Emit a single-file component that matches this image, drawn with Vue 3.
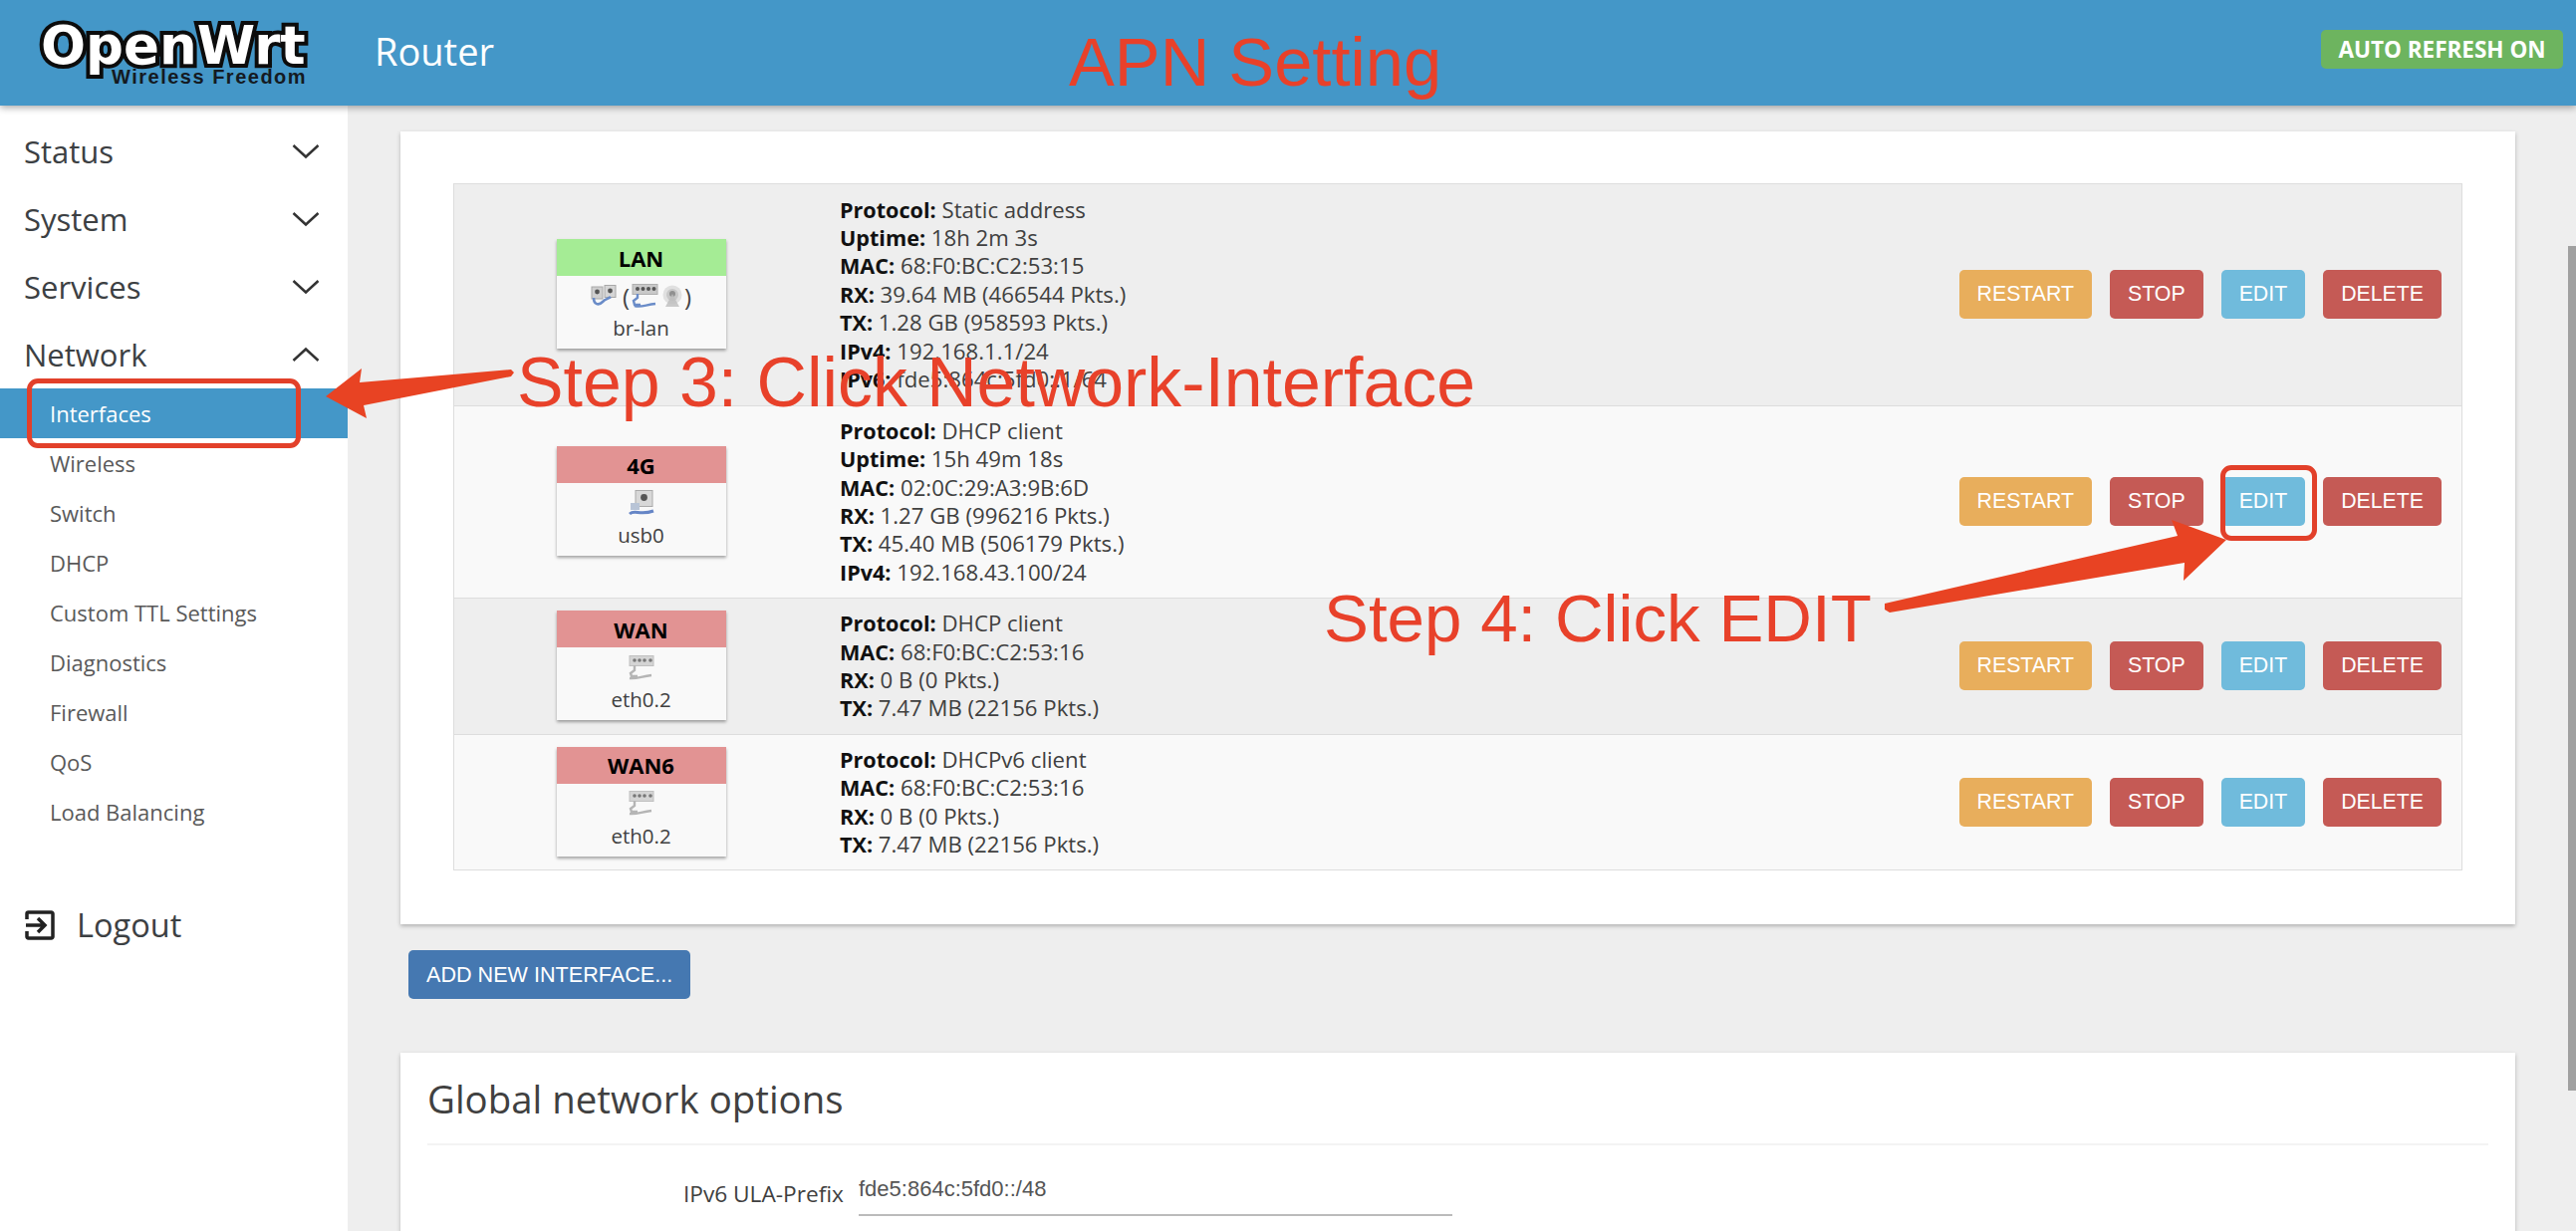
<script setup>
const topMenu = ['Status', 'System', 'Services']
const subMenu = ['Interfaces', 'Wireless', 'Switch', 'DHCP', 'Custom TTL Settings', 'Diagnostics', 'Firewall', 'QoS', 'Load Balancing']
const rows = [
  { name: 'LAN', up: true, dev: 'br-lan', icons: 'bridge', lines: [['Protocol:', 'Static address'], ['Uptime:', '18h 2m 3s'], ['MAC:', '68:F0:BC:C2:53:15'], ['RX:', '39.64 MB (466544 Pkts.)'], ['TX:', '1.28 GB (958593 Pkts.)'], ['IPv4:', '192.168.1.1/24'], ['IPv6:', 'fde5:864c:5fd0::1/64']] },
  { name: '4G', up: false, dev: 'usb0', icons: 'eth', lines: [['Protocol:', 'DHCP client'], ['Uptime:', '15h 49m 18s'], ['MAC:', '02:0C:29:A3:9B:6D'], ['RX:', '1.27 GB (996216 Pkts.)'], ['TX:', '45.40 MB (506179 Pkts.)'], ['IPv4:', '192.168.43.100/24']] },
  { name: 'WAN', up: false, dev: 'eth0.2', icons: 'switch', lines: [['Protocol:', 'DHCP client'], ['MAC:', '68:F0:BC:C2:53:16'], ['RX:', '0 B (0 Pkts.)'], ['TX:', '7.47 MB (22156 Pkts.)']] },
  { name: 'WAN6', up: false, dev: 'eth0.2', icons: 'switch', lines: [['Protocol:', 'DHCPv6 client'], ['MAC:', '68:F0:BC:C2:53:16'], ['RX:', '0 B (0 Pkts.)'], ['TX:', '7.47 MB (22156 Pkts.)']] }
]
const actions = [['RESTART', 'warn'], ['STOP', 'danger'], ['EDIT', 'info'], ['DELETE', 'danger']]
</script>

<template>
  <div class="page">
    <header class="topbar">
      <div class="logo">
        <span class="logo-main">OpenWrt</span>
        <span class="logo-sub">Wireless Freedom</span>
      </div>
      <span class="host">Router</span>
      <span class="refresh">AUTO REFRESH ON</span>
    </header>

    <div class="layout">
      <aside class="sidebar">
        <div v-for="m in topMenu" :key="m" class="menu-top">
          <span>{{ m }}</span>
          <svg class="chev" viewBox="0 0 28 16"><path d="M1.5 2 L14 13.5 L26.5 2" /></svg>
        </div>
        <div class="menu-top">
          <span>Network</span>
          <svg class="chev" viewBox="0 0 28 16"><path d="M1.5 14 L14 2.5 L26.5 14" /></svg>
        </div>
        <div v-for="(s, i) in subMenu" :key="s" class="menu-sub" :class="{ active: i === 0 }">{{ s }}</div>
        <div class="logout">
          <svg class="logout-icon" viewBox="0 0 30 30">
            <path d="M2 9 V3.5 A1.5 1.5 0 0 1 3.5 2 H26.5 A1.5 1.5 0 0 1 28 3.5 V26.500 A1.500 1.500 0 0 1 26.500 28 H3.500 A1.500 1.500 0 0 1 2 26.500 V21" />
            <path d="M1 15 H20 M13 8 L20 15 L13 22" />
          </svg>
          <span>Logout</span>
        </div>
      </aside>

      <main class="content">
        <section class="card card-table">
          <div class="table">
            <div v-for="r in rows" :key="r.name" class="row">
              <div class="badge-cell">
                <div class="badge">
                  <div class="badge-head" :class="r.up ? 'up' : 'down'">{{ r.name }}</div>
                  <div class="badge-body">
                    <div class="dev-icons">
                      <template v-if="r.icons === 'bridge'">
                        <svg class="ic-bridge" viewBox="0 0 26 22">
                          <rect x="1" y="2" width="11" height="12" fill="#cfcfcf" stroke="#a8a8a8" />
                          <rect x="14" y="0.500" width="11" height="12" fill="#d6d6d6" stroke="#a8a8a8" />
                          <circle cx="6.500" cy="7" r="2.400" fill="#555" />
                          <circle cx="19.500" cy="6" r="2.400" fill="#555" />
                          <path d="M3 13 C3 20 8 21 12 17 C15 14 18 14 20 12" fill="none" stroke="#6a8cc8" stroke-width="2.600" />
                        </svg>
                        <span class="paren">(</span>
                        <svg class="ic-switch" viewBox="0 0 27 25">
                          <rect x="1" y="0.500" width="25" height="10" fill="#c9c9c9" stroke="#b0b0b0" />
                          <circle cx="6" cy="5" r="2" fill="#555" /><circle cx="11.500" cy="5" r="2" fill="#555" /><circle cx="17" cy="5" r="2" fill="#555" /><circle cx="22.500" cy="5" r="2" fill="#555" />
                          <path d="M6 10 L6 14 L2 17 L3 21 H9 M3 22 C9 24 14 21 24 20" fill="none" stroke="#6a8cc8" stroke-width="2.400" />
                        </svg>
                        <svg class="ic-wifi" viewBox="0 0 24 23">
                          <circle cx="12" cy="10" r="9.500" fill="#e0e0e0" />
                          <circle cx="12" cy="10" r="6" fill="#c7c7c7" />
                          <circle cx="12" cy="9" r="3" fill="#8f8f8f" />
                          <path d="M12 9 L5 22 H19 Z" fill="#bdbdbd" opacity=".8" />
                        </svg>
                        <span class="paren">)</span>
                      </template>
                      <svg v-else-if="r.icons === 'eth'" class="ic-eth" viewBox="0 0 26 26">
                        <rect x="7" y="0.500" width="17" height="16" fill="#d8d8d8" stroke="#aaa" />
                        <circle cx="15.500" cy="7.500" r="3.400" fill="#555" />
                        <rect x="2" y="13" width="9" height="7" fill="#b8c4d6" />
                        <path d="M1 24 C6 19 11 26 25 21" fill="none" stroke="#6585c6" stroke-width="3" />
                      </svg>
                      <svg v-else class="ic-wan" viewBox="0 0 27 25">
                        <rect x="2" y="0.500" width="24" height="10" fill="#d4d4d4" stroke="#c0c0c0" />
                        <circle cx="7" cy="5" r="1.800" fill="#777" /><circle cx="12" cy="5" r="1.800" fill="#777" /><circle cx="17" cy="5" r="1.800" fill="#777" /><circle cx="23" cy="5" r="1.800" fill="#777" />
                        <path d="M7 10 L7 15 L3 18 L4 21 H10 M2 23 C9 24 14 21 24 20" fill="none" stroke="#b5b5b5" stroke-width="2.400" />
                      </svg>
                    </div>
                    <div class="dev-name">{{ r.dev }}</div>
                  </div>
                </div>
              </div>
              <div class="info">
                <div v-for="l in r.lines" :key="l[0]"><b>{{ l[0] }}</b> {{ l[1] }}</div>
              </div>
              <div class="actions">
                <button v-for="a in actions" :key="a[0]" class="btn" :class="a[1]">{{ a[0] }}</button>
              </div>
            </div>
          </div>
        </section>

        <div class="add-wrap"><button class="btn primary">ADD NEW INTERFACE...</button></div>

        <section class="card card-global">
          <h3 class="global-title">Global network options</h3>
          <div class="field">
            <label>IPv6 ULA-Prefix</label>
            <input value="fde5:864c:5fd0::/48" readonly />
          </div>
        </section>
      </main>
    </div>

    <div class="scrollbar"></div>

    <svg class="arrows" viewBox="0 0 2586 1236">
      <polygon points="327,398 363,370 361,384 513,371 516,374 513,378 365,407 368,420" />
      <polygon points="2235,542 2192,583 2193,565 1897,615 1892,612 1892,606 2186,538 2180,522" />
    </svg>
    <div class="mark mark-iface"></div>
    <div class="mark mark-edit"></div>
    <div class="note note-apn">APN Setting</div>
    <div class="note note-s3">Step 3: Click Network-Interface</div>
    <div class="note note-s4">Step 4: Click EDIT</div>
  </div>
</template>

<style>
html, body { margin: 0; padding: 0; overflow: hidden; }
</style>

<style scoped>
.page {
  position: relative;
  width: 2586px;
  height: 1236px;
  overflow: hidden;
  display: flex;
  flex-direction: column;
  background: #eee;
  font-family: "Open Sans", "Noto Sans", sans-serif;
  color: #404040;
}
.topbar {
  position: relative;
  z-index: 2;
  flex: none;
  height: 106px;
  box-sizing: border-box;
  padding: 0 13px 0 41px;
  display: flex;
  align-items: center;
  background: #4497c8;
  box-shadow: 0 2px 7px rgba(0, 0, 0, .35);
}
.logo {
  width: 335px;
  display: flex;
  flex-direction: column;
}
.logo-main {
  font-family: "DejaVu Sans", sans-serif;
  font-weight: 700;
  font-size: 53px;
  line-height: 54px;
  color: #fff;
  -webkit-text-stroke: 8px #0c0c0c;
  paint-order: stroke fill;
}
.logo-sub {
  margin: -7px 0 0 71px;
  font-family: "Liberation Sans", sans-serif;
  font-weight: 700;
  font-size: 20px;
  line-height: 22px;
  letter-spacing: 1.500px;
  color: #141a22;
}
.host {
  margin-top: -5px;
  font-size: 38px;
  color: #fff;
}
.refresh {
  margin-left: auto;
  width: 243px;
  height: 39px;
  display: flex;
  align-items: center;
  justify-content: center;
  margin-top: -7px;
  border-radius: 5px;
  background: #6db45f;
  color: #fff;
  font-weight: 700;
  font-size: 22.500px;
}
.layout {
  flex: 1;
  min-height: 0;
  display: flex;
}
.sidebar {
  flex: none;
  width: 349px;
  box-sizing: border-box;
  padding-top: 12px;
  background: #fff;
}
.menu-top {
  height: 68px;
  padding: 0 28px 0 24px;
  display: flex;
  align-items: center;
  justify-content: space-between;
  font-size: 31px;
  color: #3c4043;
}
.chev {
  width: 28px;
  height: 16px;
}
.chev path {
  fill: none;
  stroke: #333;
  stroke-width: 2.500;
}
.menu-sub {
  height: 50px;
  padding-left: 50px;
  display: flex;
  align-items: center;
  font-size: 22px;
  color: #595959;
}
.menu-sub.active {
  background: #4497c8;
  color: #fff;
}
.logout {
  margin-top: 66px;
  padding-left: 25px;
  display: flex;
  align-items: center;
  gap: 22px;
  font-size: 32.500px;
  color: #3c4043;
}
.logout-icon {
  width: 30px;
  height: 30px;
}
.logout-icon path {
  fill: none;
  stroke: #222;
  stroke-width: 3.500;
}
.content {
  flex: 1;
  min-width: 0;
  box-sizing: border-box;
  padding: 26px 61px 0 53px;
}
.card {
  background: #fff;
  box-shadow: 0 2px 4px rgba(0, 0, 0, .25);
}
.card-table {
  padding: 52px 53px 54px;
}
.table {
  display: grid;
  grid-template-rows: 222px 193px 137px 136px;
  border: 1px solid #ddd;
}
.row {
  display: grid;
  grid-template-columns: 375px 1fr auto;
  align-items: center;
  background: #f9f9f9;
  border-top: 1px solid #ddd;
}
.row:first-child {
  border-top: 0;
}
.row:nth-child(odd) {
  background: #eee;
}
.badge-cell {
  display: flex;
  justify-content: center;
  margin-top: -2px;
}
.badge {
  width: 170px;
  height: 110px;
  display: flex;
  flex-direction: column;
  box-shadow: 0 2px 3px rgba(0, 0, 0, .35);
  background: #f9f9f9;
}
.badge-head {
  height: 37px;
  display: flex;
  align-items: center;
  justify-content: center;
  font-weight: 700;
  font-size: 22px;
  color: #000;
}
.badge-head.up { background: #a5ec95; }
.badge-head.down { background: #e29393; }
.badge-body {
  flex: 1;
  display: flex;
  flex-direction: column;
  align-items: center;
}
.dev-icons {
  margin-top: 6px;
  height: 28px;
  display: flex;
  align-items: center;
  justify-content: center;
}
.paren {
  font-size: 24px;
  line-height: 28px;
  color: #444;
  padding-top: 2px;
}
.ic-bridge { width: 26px; height: 22px; margin-right: 6px; }
.ic-switch { width: 27px; height: 25px; margin: 0 2px 0 2px; }
.ic-wifi { width: 24px; height: 23px; }
.ic-eth { width: 26px; height: 26px; }
.ic-wan { width: 27px; height: 25px; }
.dev-name {
  margin-top: 3px;
  font-size: 20.500px;
  line-height: 30px;
  color: #404040;
}
.info {
  padding-left: 12px;
  font-size: 22.200px;
  line-height: 28.400px;
  color: #404040;
}
.info b {
  color: #111;
  font-size: 21.600px;
}
.actions {
  padding-right: 20px;
  margin-top: -1px;
  display: flex;
  gap: 18px;
}
.btn {
  height: 49px;
  padding: 0 18px;
  border: 0;
  border-radius: 5px;
  font-family: "Liberation Sans", sans-serif;
  font-size: 21.300px;
  color: #fff;
}
.btn.warn { background: #e8ae5c; }
.btn.danger { background: #c55a55; }
.btn.info { background: #70bbdc; }
.btn.primary {
  font-size: 21.600px;
  background: #4578b1;
}
.add-wrap {
  margin: 26px 0 54px 8px;
  display: flex;
}
.card-global {
  height: 300px;
  padding: 0 27px 0 27px;
}
.global-title {
  margin: 0;
  height: 91px;
  display: flex;
  align-items: center;
  border-bottom: 2px solid #f3f3f3;
  font-weight: 400;
  font-size: 38.400px;
  color: #404040;
}
.field {
  margin-top: 25px;
  display: flex;
  align-items: flex-start;
  gap: 15px;
  padding-left: 249px;
}
.field label {
  width: 169px;
  text-align: right;
  font-size: 22.700px;
  line-height: 48px;
  white-space: nowrap;
}
.field input {
  width: 596px;
  height: 46px;
  box-sizing: border-box;
  padding: 0;
  border: 0;
  border-bottom: 2px solid #bbb;
  outline: 0;
  background: transparent;
  font-family: "Liberation Sans", sans-serif;
  font-size: 22px;
  color: #555;
  padding-bottom: 6px;
}
.scrollbar {
  position: absolute;
  z-index: 3;
  top: 247px;
  right: 0;
  width: 8px;
  height: 848px;
  background: #a0a0a0;
}
.arrows {
  position: absolute;
  z-index: 4;
  inset: 0;
  width: 2586px;
  height: 1236px;
  pointer-events: none;
}
.arrows polygon {
  fill: #e84323;
}
.mark {
  position: absolute;
  z-index: 4;
  box-sizing: border-box;
  border: 5px solid #e2402a;
  border-radius: 11px;
}
.mark-iface {
  left: 27px;
  top: 380px;
  width: 275px;
  height: 70px;
}
.mark-edit {
  left: 2229px;
  top: 467px;
  width: 97px;
  height: 76px;
}
.note {
  position: absolute;
  z-index: 5;
  font-family: "Liberation Sans", sans-serif;
  line-height: 1;
  white-space: nowrap;
  color: #e8412a;
}
.note-apn {
  left: 1073px;
  top: 29px;
  font-size: 68.700px;
}
.note-s3 {
  left: 519px;
  top: 350px;
  font-size: 69.800px;
}
.note-s4 {
  left: 1329px;
  top: 587px;
  font-size: 67.300px;
}
</style>
